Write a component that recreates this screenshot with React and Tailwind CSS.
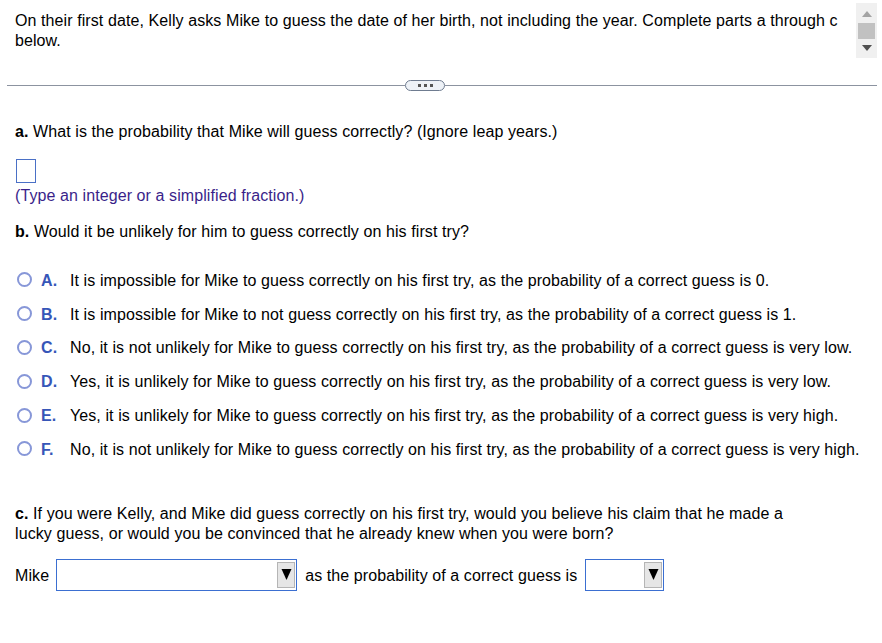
import React from "react";

const font = { fontFamily: '"Liberation Sans", Arial, sans-serif' };

const options = [
  ["A.", "It is impossible for Mike to guess correctly on his first try, as the probability of a correct guess is 0."],
  ["B.", "It is impossible for Mike to not guess correctly on his first try, as the probability of a correct guess is 1."],
  ["C.", "No, it is not unlikely for Mike to guess correctly on his first try, as the probability of a correct guess is very low."],
  ["D.", "Yes, it is unlikely for Mike to guess correctly on his first try, as the probability of a correct guess is very low."],
  ["E.", "Yes, it is unlikely for Mike to guess correctly on his first try, as the probability of a correct guess is very high."],
  ["F.", "No, it is not unlikely for Mike to guess correctly on his first try, as the probability of a correct guess is very high."],
];

function DropArrow() {
  return (
    <div className="ml-auto mr-[1px] flex h-[26px] w-[18px] items-center justify-center border border-[#b5b5b5] bg-[#e6e6e6]">
      <svg width="11" height="13" viewBox="0 0 11 13">
        <polygon points="0.5,1 10.5,1 5.5,12" fill="#000" />
      </svg>
    </div>
  );
}

export default function App() {
  return (
    <div className="relative w-[882px] h-[643px] bg-white text-[16px] leading-[20px] tracking-[0.09px] text-black" style={font}>
      <div className="flex h-[60px]">
        <div className="flex-1 pl-[15px] pt-[11px]">
          On their first date, Kelly asks Mike to guess the date of her birth, not including the year. Complete parts a through c
          <br />
          below.
        </div>
        <div className="mt-[3px] mr-[5px] flex h-[55px] w-[21px] flex-col items-center bg-[#f0f0f0]">
          <svg className="mt-[8px]" width="10" height="6" viewBox="0 0 10 6">
            <polygon points="0,6 10,6 5,0" fill="#a3a3a3" />
          </svg>
          <div className="mt-[6px] h-[16px] w-[17px] bg-[#c1c1c1]" />
          <svg className="mt-[6px]" width="10" height="6" viewBox="0 0 10 6">
            <polygon points="0,0 10,0 5,6" fill="#505050" />
          </svg>
        </div>
      </div>

      <div className="mt-[20px] ml-[7px] mr-[5px] flex h-[11px] items-center">
        <div className="h-px w-[398px] bg-[#8c93a0]" />
        <div className="flex h-[11px] w-[40px] items-center justify-center gap-[3px] rounded-full border border-[#6f7c90] bg-[#eef2f7]">
          <div className="h-[3px] w-[3px] bg-[#555]" />
          <div className="h-[3px] w-[3px] bg-[#555]" />
          <div className="h-[3px] w-[3px] bg-[#555]" />
        </div>
        <div className="h-px flex-1 bg-[#8c93a0]" />
      </div>

      <div className="mt-[31px] pl-[15px]">
        <span className="font-bold">a.</span> What is the probability that Mike will guess correctly? (Ignore leap years.)
      </div>
      <div className="mt-[17px] ml-[16px] h-[24px] w-[20px] border border-[#4a70c6]" />
      <div className="mt-[3px] pl-[15px] text-[#3a1f8a]">(Type an integer or a simplified fraction.)</div>

      <div className="mt-[16px] pl-[15px]">
        <span className="font-bold">b.</span> Would it be unlikely for him to guess correctly on his first try?
      </div>

      <div className="mt-[21px] flex flex-col">
        {options.map(([l, t]) => (
          <div key={l} className="flex h-[33.8px] items-center whitespace-nowrap">
            <div className="ml-[17px] h-[15px] w-[15px] rounded-full border-2 border-[#8797d8]" />
            <span className="ml-[9px] w-[29px] pt-[2px] font-bold text-[#3656b8]">{l}</span>
            <span className="pt-[2px]">{t}</span>
          </div>
        ))}
      </div>

      <div className="mt-[38px] pl-[15px]">
        <span className="font-bold">c.</span> If you were Kelly, and Mike did guess correctly on his first try, would you believe his claim that he made a
        <br />
        lucky guess, or would you be convinced that he already knew when you were born?
      </div>

      <div className="mt-[15px] flex h-[32px] items-center pl-[15px] whitespace-nowrap">
        <span className="pt-[2px]">Mike</span>
        <div className="ml-[7px] flex h-[32px] w-[241px] items-center border border-[#3b6fd1] bg-white">
          <DropArrow />
        </div>
        <span className="ml-[8px] pt-[2px]">as the probability of a correct guess is</span>
        <div className="ml-[8px] flex h-[32px] w-[79px] items-center border border-[#3b6fd1] bg-white">
          <DropArrow />
        </div>
      </div>
    </div>
  );
}
